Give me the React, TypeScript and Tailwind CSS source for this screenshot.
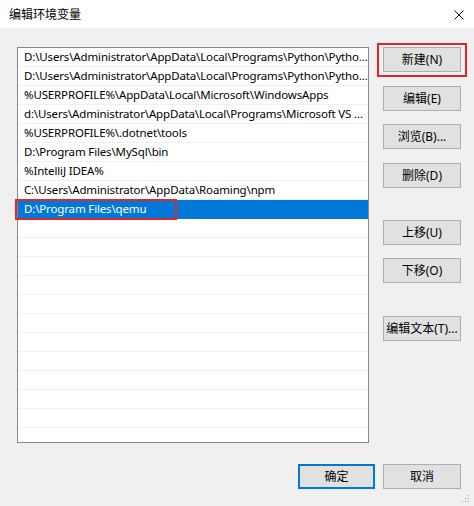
import React from "react";

const rows: string[] = [
  "D:\\Users\\Administrator\\AppData\\Local\\Programs\\Python\\Pytho...",
  "D:\\Users\\Administrator\\AppData\\Local\\Programs\\Python\\Pytho...",
  "%USERPROFILE%\\AppData\\Local\\Microsoft\\WindowsApps",
  "d:\\Users\\Administrator\\AppData\\Local\\Programs\\Microsoft VS ...",
  "%USERPROFILE%\\.dotnet\\tools",
  "D:\\Program Files\\MySql\\bin",
  "%IntelliJ IDEA%",
  "C:\\Users\\Administrator\\AppData\\Roaming\\npm",
  "D:\\Program Files\\qemu",
];

const font = {
  fontFamily: '"Segoe UI", "Noto Sans", "Noto Sans CJK SC", sans-serif',
};

function Btn({ label, className = "" }: { label: string; className?: string }) {
  return (
    <div
      className={`flex h-[25px] w-[78px] items-center justify-center border border-[#adadad] bg-[#e1e1e1] text-[12px] text-black ${className}`}
    >
      {label}
    </div>
  );
}

export default function App() {
  const total = 21;
  return (
    <div
      className="flex h-[506px] w-[474px] flex-col overflow-hidden bg-[#f0f0f0]"
      style={font}
    >
      {/* title bar */}
      <div className="flex h-[28px] shrink-0 items-center justify-between bg-white pl-[9px] pr-[10px] pt-[1px]">
        <span className="text-[12px] text-black">编辑环境变量</span>
        <svg width="10" height="10" viewBox="0 0 10 10">
          <path d="M0.5 0.5 L9.5 9.5 M9.5 0.5 L0.5 9.5" stroke="#111" strokeWidth="1" />
        </svg>
      </div>

      {/* body */}
      <div className="flex pl-[17px] pt-[19px]">
        <div className="relative h-[396px] w-[352px] border border-[#828790] bg-white">
          <div className="h-full overflow-hidden">
            {Array.from({ length: total }).map((_, i) => {
              const text = rows[i];
              const selected = i === 8;
              return (
                <div
                  key={i}
                  className={`flex h-[19px] items-center overflow-hidden border-b pl-[6px] text-[11.5px] tracking-[-0.15px] whitespace-nowrap ${
                    selected
                      ? "border-[#0078d7] bg-[#0078d7] text-white"
                      : "border-[#f0f0f0] text-black"
                  }`}
                >
                  {text ?? ""}
                </div>
              );
            })}
          </div>
          {/* red annotation box on selected row */}
          <div className="pointer-events-none absolute left-[-3px] top-[151px] h-[21px] w-[162px] border-2 border-[#e0262c]" />
        </div>

        <div className="ml-[14px] flex flex-col">
          <div className="relative">
            <Btn label="新建(N)" />
            <div className="pointer-events-none absolute left-[-6px] top-[-4px] h-[34px] w-[90px] border-2 border-[#e0262c]" />
          </div>
          <Btn label="编辑(E)" className="mt-[14px]" />
          <Btn label="浏览(B)..." className="mt-[13px]" />
          <Btn label="删除(D)" className="mt-[14px]" />
          <Btn label="上移(U)" className="mt-[32px]" />
          <Btn label="下移(O)" className="mt-[13px]" />
          <Btn label="编辑文本(T)..." className="mt-[33px]" />
        </div>
      </div>

      {/* bottom buttons */}
      <div className="mt-[21px] flex justify-end gap-[8px] pr-[13px]">
        <div className="flex h-[25px] w-[77px] items-center justify-center border-2 border-[#0078d7] bg-[#e1e1e1] text-[12px] text-black">
          确定
        </div>
        <Btn label="取消" />
      </div>

      {/* resize grip */}
      <div className="flex flex-1 items-end justify-end pb-[3px] pr-[4px]">
        <svg width="8" height="8" viewBox="0 0 8 8">
          <rect x="6" y="0" width="1" height="1" fill="#a0a0a0" />
          <rect x="3" y="3" width="1" height="1" fill="#a0a0a0" />
          <rect x="6" y="3" width="1" height="1" fill="#a0a0a0" />
          <rect x="0" y="6" width="1" height="1" fill="#a0a0a0" />
          <rect x="3" y="6" width="1" height="1" fill="#a0a0a0" />
          <rect x="6" y="6" width="1" height="1" fill="#a0a0a0" />
        </svg>
      </div>
    </div>
  );
}
